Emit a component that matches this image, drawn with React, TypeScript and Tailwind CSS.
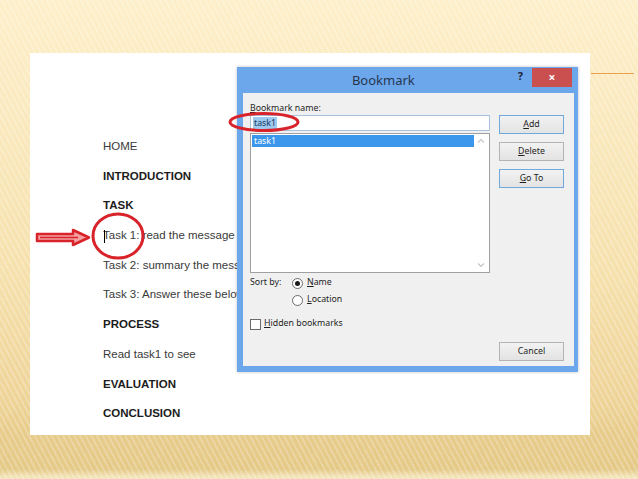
const DOC_LINES: { text: string; bold?: boolean }[] = [
  { text: 'HOME' },
  { text: 'INTRODUCTION', bold: true },
  { text: 'TASK', bold: true },
  { text: 'Task 1: read the message carefully' },
  { text: 'Task 2: summary the message content' },
  { text: 'Task 3: Answer these below questions' },
  { text: 'PROCESS', bold: true },
  { text: 'Read  task1 to see' },
  { text: 'EVALUATION', bold: true },
  { text: 'CONCLUSION', bold: true },
];

function DialogButton({ label, hot, focused }: { label: string; hot: number; focused?: boolean }) {
  return (
    <button
      className={`h-[19px] w-[65px] border text-[8.8px] leading-none text-[#1e1e1e] bg-gradient-to-b from-[#f2f2f2] to-[#e3e3e3] ${
        focused ? 'border-[#6fa9dd]' : 'border-[#b4b4b4]'
      }`}
    >
      {label.slice(0, hot)}
      <span className="underline">{label[hot]}</span>
      {label.slice(hot + 1)}
    </button>
  );
}

function Radio({ checked }: { checked?: boolean }) {
  return (
    <span className="flex h-[11px] w-[11px] items-center justify-center rounded-full border border-[#6a6a6a] bg-white">
      {checked && <span className="h-[5px] w-[5px] rounded-full bg-[#1a1a1a]" />}
    </span>
  );
}

function BookmarkDialog() {
  return (
    <div className="absolute left-[207px] top-[14px] flex h-[305px] w-[341px] flex-col bg-[#6ca7ec] pl-[6px] pr-[4px] pb-[6px] shadow-[0_0_3px_rgba(0,0,0,0.25)] font-['Noto_Sans',sans-serif]">
      {/* title bar */}
      <div className="flex h-[26px] items-start">
        <div className="flex-1 pl-[6px] pt-[5px] text-center text-[13px] leading-[16px] text-[#26364f]">Bookmark</div>
        <span className="mr-[9px] pt-[3px] text-[11px] font-bold leading-none text-[#223]">?</span>
        <span className="mr-[2px] mt-[1px] flex h-[19px] w-[40px] items-center justify-center bg-[#c9504f] text-[12px] font-bold leading-none text-white">
          ×
        </span>
      </div>

      {/* body */}
      <div className="flex flex-1 bg-[#f0f0f0] text-[8.8px] text-[#1e1e1e]">
        <div className="flex w-[247px] flex-col pl-[7px]">
          <div className="mt-[8px] h-[14px] leading-[14px]">
            <span className="underline">B</span>ookmark name:
          </div>
          <div className="flex h-[16px] w-[240px] items-center border border-[#a9c3df] bg-white px-[2px]">
            <span className="bg-[#9fcaf0] px-[1px] leading-[12px] text-[#15375e]">task1</span>
          </div>
          <div className="relative mt-[2px] h-[140px] w-[240px] border border-[#a0a0a0] bg-white">
            <div className="ml-[1px] mt-[1px] h-[12px] w-[222px] bg-[#3b97ec] pl-[2px] leading-[12px] text-white">task1</div>
            <div className="absolute right-0 top-0 flex h-full w-[16px] flex-col items-center justify-between py-[4px] text-[#c4c4c4]">
              <svg width="8" height="5" viewBox="0 0 8 5" fill="none" stroke="currentColor" strokeWidth="1.2">
                <path d="M1 4.5 4 1.5 7 4.5" />
              </svg>
              <svg width="8" height="5" viewBox="0 0 8 5" fill="none" stroke="currentColor" strokeWidth="1.2">
                <path d="M1 0.5 4 3.5 7 0.5" />
              </svg>
            </div>
          </div>
          <div className="mt-[3px] flex h-[14px] items-center">
            <span className="w-[42px]">Sort by:</span>
            <Radio checked />
            <span className="ml-[4px]">
              <span className="underline">N</span>ame
            </span>
          </div>
          <div className="mt-[3px] flex h-[14px] items-center pl-[42px]">
            <Radio />
            <span className="ml-[4px]">
              <span className="underline">L</span>ocation
            </span>
          </div>
          <div className="mt-[10px] flex h-[14px] items-center">
            <span className="h-[11px] w-[11px] border border-[#6a6a6a] bg-white" />
            <span className="ml-[3px]">
              <span className="underline">H</span>idden bookmarks
            </span>
          </div>
        </div>

        <div className="ml-[9px] flex flex-col gap-[8px] pb-[5px] pt-[22px]">
          <DialogButton label="Add" hot={0} focused />
          <DialogButton label="Delete" hot={0} />
          <DialogButton label="Go To" hot={0} focused />
          <div className="mt-auto">
            <button className="h-[19px] w-[65px] border border-[#b4b4b4] bg-gradient-to-b from-[#f2f2f2] to-[#e3e3e3] text-[8.8px] leading-none text-[#1e1e1e]">
              Cancel
            </button>
          </div>
        </div>
      </div>
    </div>
  );
}

export default function App() {
  return (
    <div className="relative flex h-[479px] w-[638px] overflow-hidden pl-[30px] pt-[53px] [background:repeating-linear-gradient(62deg,rgba(255,255,255,0.22)_0px,rgba(255,255,255,0.22)_2px,rgba(0,0,0,0)_2px,rgba(0,0,0,0)_5px),linear-gradient(to_bottom,#fdefc9_0%,#fbeac0_20%,#f6e1ad_55%,#eed397_84%,#e6cb8a_91%,#e4c987_98%,#f3e3b8_99.5%)]">
      {/* slide content */}
      <div className="relative h-[382px] w-[560px] bg-white">
        <div className="flex flex-col pl-[73px] pt-[79px] font-['Liberation_Sans',sans-serif] text-[11.5px]">
          {DOC_LINES.map((l) => (
            <div
              key={l.text}
              className={`h-[29.7px] whitespace-nowrap leading-[29.7px] ${l.bold ? 'font-bold text-[#1c1c1c]' : 'text-[#3a3a3a]'}`}
            >
              {l.text}
            </div>
          ))}
        </div>
        <BookmarkDialog />
      </div>
      <div className="ml-[1px] mt-[20px] h-px w-[43px] bg-[#e9a24c]" />

      {/* annotations */}
      <span className="absolute left-[104px] top-[230px] h-[13px] w-px bg-black" />
      <svg className="absolute left-0 top-0" width="638" height="479" viewBox="0 0 638 479" fill="none">
        <ellipse cx="264" cy="122" rx="34" ry="8.5" stroke="#d9232a" strokeWidth="3" />
        <ellipse cx="118" cy="236" rx="25" ry="22" stroke="#d9232a" strokeWidth="3" />
        <path
          d="M37 234 H73 V230 L89 237.5 L73 245 V241 H37 Z"
          stroke="#d9232a"
          strokeWidth="2.5"
          strokeLinejoin="round"
          fill="#f3a0a0"
        />
        <path d="M40 237.5 H78" stroke="#d9232a" strokeWidth="1.5" />
      </svg>
    </div>
  );
}
